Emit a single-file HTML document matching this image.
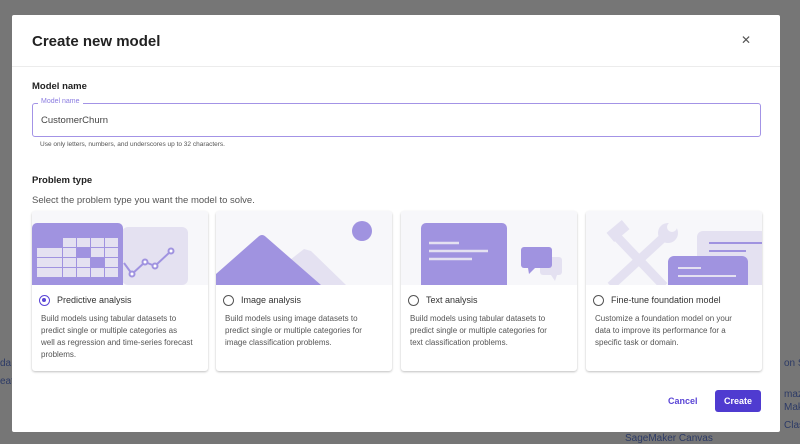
<!DOCTYPE html>
<html><head><style>
*{box-sizing:border-box;margin:0;padding:0}
body{width:800px;height:441px;overflow:hidden;background:#767676;font-family:"Liberation Sans",sans-serif;position:relative}
.bgt{position:absolute;color:#2c3a66;font-size:10px;white-space:nowrap}
.modal{position:absolute;left:12px;top:15px;width:768px;height:417px;background:#fff;border-radius:2px}
.title{position:absolute;left:20px;top:18px;font-size:15px;font-weight:bold;color:#222}
.x{position:absolute;left:729px;top:18px;font-size:12px;color:#555}
.hr{position:absolute;left:0;right:0;top:51px;border-top:1px solid #ececec}
.lbl{position:absolute;left:20px;font-size:9.5px;font-weight:bold;color:#222}
.input{position:absolute;left:20px;top:88px;width:729px;height:34px;border:1.5px solid #a393e6;border-radius:3px}
.input .lg{position:absolute;left:5px;top:-6px;background:#fff;padding:0 3px;font-size:7px;color:#8a7be0}
.input .v{position:absolute;left:8px;top:11px;font-size:9.5px;color:#444}
.hint{position:absolute;left:28px;top:126px;font-size:6.5px;color:#555}
.sub{position:absolute;left:20px;top:180px;font-size:9.5px;color:#555}
.card{position:absolute;top:196px;width:176px;height:160px;background:#fff;border-radius:3px;box-shadow:0 1px 2px rgba(0,0,0,.25);overflow:hidden}
.card svg{position:absolute;left:0;top:0}
.rad{position:absolute;left:7px;top:84px;width:11px;height:11px;border:1.5px solid #555;border-radius:50%}
.rad.on{border-color:#5a45d6}
.rad.on:after{content:"";position:absolute;left:2px;top:2px;width:4px;height:4px;background:#5a45d6;border-radius:50%}
.ct{position:absolute;left:25px;top:84px;font-size:9px;color:#333}
.cd{position:absolute;left:9px;top:102px;width:152px;font-size:8px;line-height:12px;color:#555}
.cancel{position:absolute;left:656px;top:381px;font-size:9px;font-weight:bold;color:#5a45d6}
.create{position:absolute;left:703px;top:375px;width:46px;height:22px;background:#4f3bd0;border-radius:3px;color:#fff;font-size:9px;font-weight:bold;text-align:center;line-height:22px}
</style></head><body>
<div class="bgt" style="left:0;top:358px">da</div>
<div class="bgt" style="left:0;top:376px">eat</div>
<div class="bgt" style="left:784px;top:358px">on S</div>
<div class="bgt" style="left:784px;top:389px">mazo</div>
<div class="bgt" style="left:784px;top:402px">Make</div>
<div class="bgt" style="left:784px;top:420px">Class</div>
<div class="bgt" style="left:625px;top:433px">SageMaker Canvas</div>
<div class="modal">
<div class="title">Create new model</div>
<div class="x">✕</div>
<div class="hr"></div>
<div class="lbl" style="top:66px">Model name</div>
<div class="input"><span class="lg">Model name</span><span class="v">CustomerChurn</span></div>
<div class="hint">Use only letters, numbers, and underscores up to 32 characters.</div>
<div class="lbl" style="top:160px">Problem type</div>
<div class="sub">Select the problem type you want the model to solve.</div>

<div class="card" style="left:20px">
<svg width="176" height="74"><rect width="176" height="74" fill="#f7f7fa"/>
<rect x="90" y="16" width="66" height="58" rx="6" fill="#e4e1f1"/>
<rect x="0" y="12" width="91" height="70" rx="5" fill="#a093e0"/>
<g fill="#e4e1f1"><rect x="31" y="27" width="13" height="9"/><rect x="45" y="27" width="13" height="9"/><rect x="59" y="27" width="13" height="9"/><rect x="73" y="27" width="13" height="9"/>
<rect x="5" y="37" width="25" height="9"/><rect x="31" y="37" width="13" height="9"/><rect x="59" y="37" width="13" height="9"/><rect x="73" y="37" width="13" height="9"/>
<rect x="5" y="47" width="25" height="9"/><rect x="31" y="47" width="13" height="9"/><rect x="45" y="47" width="13" height="9"/><rect x="73" y="47" width="13" height="9"/>
<rect x="5" y="57" width="25" height="9"/><rect x="31" y="57" width="13" height="9"/><rect x="45" y="57" width="13" height="9"/><rect x="59" y="57" width="13" height="9"/><rect x="73" y="57" width="13" height="9"/></g>
<polyline points="92,52 100,63 113,51 123,55 139,40" fill="none" stroke="#a093e0" stroke-width="2"/>
<g fill="#fff" stroke="#a093e0" stroke-width="2"><circle cx="100" cy="63" r="2.5"/><circle cx="113" cy="51" r="2.5"/><circle cx="123" cy="55" r="2.5"/><circle cx="139" cy="40" r="2.5"/></g></svg>
<div class="rad on"></div><div class="ct">Predictive analysis</div>
<div class="cd">Build models using tabular datasets to predict single or multiple categories as well as regression and time-series forecast problems.</div></div>

<div class="card" style="left:204px">
<svg width="176" height="74"><rect width="176" height="74" fill="#f7f7fa"/>
<polygon points="80,74 130,74 95,40 88,38 60,60" fill="#e4e1f1"/>
<path d="M0 63 L42 26 Q46 22 50 26 L105 74 L0 74Z" fill="#a093e0"/>
<circle cx="146" cy="20" r="10" fill="#a093e0"/></svg>
<div class="rad"></div><div class="ct">Image analysis</div>
<div class="cd">Build models using image datasets to predict single or multiple categories for image classification problems.</div></div>

<div class="card" style="left:389px">
<svg width="176" height="74"><rect width="176" height="74" fill="#f7f7fa"/>
<rect x="20" y="12" width="86" height="70" rx="5" fill="#a093e0"/>
<g stroke="#e4e1f1" stroke-width="2.5"><line x1="28" y1="32" x2="58" y2="32"/><line x1="28" y1="40" x2="87" y2="40"/><line x1="28" y1="48" x2="71" y2="48"/></g>
<rect x="139" y="46" width="22" height="18" rx="3" fill="#e4e1f1"/><polygon points="150,64 156,64 154,70" fill="#e4e1f1"/>
<rect x="120" y="36" width="31" height="21" rx="3" fill="#a093e0"/><polygon points="127,57 134,57 128,63" fill="#a093e0"/></svg>
<div class="rad"></div><div class="ct">Text analysis</div>
<div class="cd">Build models using tabular datasets to predict single or multiple categories for text classification problems.</div></div>

<div class="card" style="left:574px">
<svg width="176" height="74"><rect width="176" height="74" fill="#f7f7fa"/>
<g stroke="#e4e1f1" stroke-width="9" stroke-linecap="square"><line x1="35" y1="30" x2="75" y2="72"/><line x1="78" y1="26" x2="28" y2="72"/></g>
<rect x="22" y="14" width="20" height="12" fill="#e4e1f1" transform="rotate(-40 32 20)"/>
<circle cx="82" cy="22" r="10" fill="#e4e1f1"/><circle cx="86" cy="16" r="5" fill="#f7f7fa"/>
<rect x="111" y="20" width="70" height="60" rx="6" fill="#e4e1f1"/>
<g stroke="#a093e0" stroke-width="2"><line x1="123" y1="32" x2="176" y2="32"/><line x1="123" y1="40" x2="160" y2="40"/></g>
<rect x="82" y="45" width="80" height="40" rx="6" fill="#a093e0"/>
<g stroke="#e4e1f1" stroke-width="2"><line x1="92" y1="57" x2="115" y2="57"/><line x1="92" y1="65" x2="150" y2="65"/></g></svg>
<div class="rad"></div><div class="ct">Fine-tune foundation model</div>
<div class="cd">Customize a foundation model on your data to improve its performance for a specific task or domain.</div></div>

<div class="cancel">Cancel</div>
<div class="create">Create</div>
</div>
</body></html>
